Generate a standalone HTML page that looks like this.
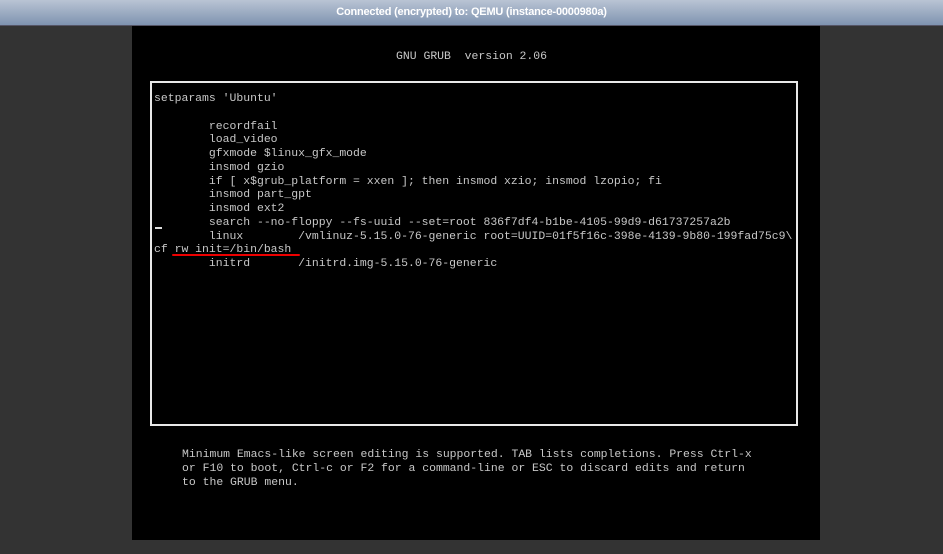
<!DOCTYPE html>
<html><head><style>
html,body{margin:0;padding:0;width:943px;height:554px;overflow:hidden;background:#333;}
.bar{position:absolute;left:0;top:0;width:943px;height:25px;background:linear-gradient(#b9c4d4,#7f93b0);border-bottom:1px solid #556;}
.bar span{position:absolute;left:0;right:0;top:6px;text-align:center;color:#fff;font:bold 11px "Liberation Sans",sans-serif;letter-spacing:-0.2px;}
.scr{position:absolute;left:132px;top:26px;width:688px;height:514px;background:#000;}
.t{position:absolute;font-family:"Liberation Mono",monospace;font-size:11.45px;color:#c8c8c8;white-space:pre;line-height:13.75px;}
.box{position:absolute;left:150px;top:81px;width:644px;height:341px;border:2px solid #e8e8e8;}
</style></head><body>
<div class="bar"><span>Connected (encrypted) to: QEMU (instance-0000980a)</span></div>
<div class="scr"></div>
<div class="t" style="left:396px;top:50px;">GNU GRUB  version 2.06</div>
<div class="box"></div>
<div class="t" style="left:154px;top:92px;">setparams 'Ubuntu'

        recordfail
        load_video
        gfxmode $linux_gfx_mode
        insmod gzio
        if [ x$grub_platform = xxen ]; then insmod xzio; insmod lzopio; fi
        insmod part_gpt
        insmod ext2
        search --no-floppy --fs-uuid --set=root 836f7df4-b1be-4105-99d9-d61737257a2b
        linux        /vmlinuz-5.15.0-76-generic root=UUID=01f5f16c-398e-4139-9b80-199fad75c9\
cf rw init=/bin/bash
        initrd       /initrd.img-5.15.0-76-generic</div>
<div style="position:absolute;left:155px;top:227px;width:7px;height:2px;background:#ddd;"></div>
<div style="position:absolute;left:172px;top:254px;width:128px;height:2px;background:#e00;border-radius:1px;"></div>
<div class="t" style="left:182px;top:448px;">Minimum Emacs-like screen editing is supported. TAB lists completions. Press Ctrl-x
or F10 to boot, Ctrl-c or F2 for a command-line or ESC to discard edits and return
to the GRUB menu.</div>
</body></html>
